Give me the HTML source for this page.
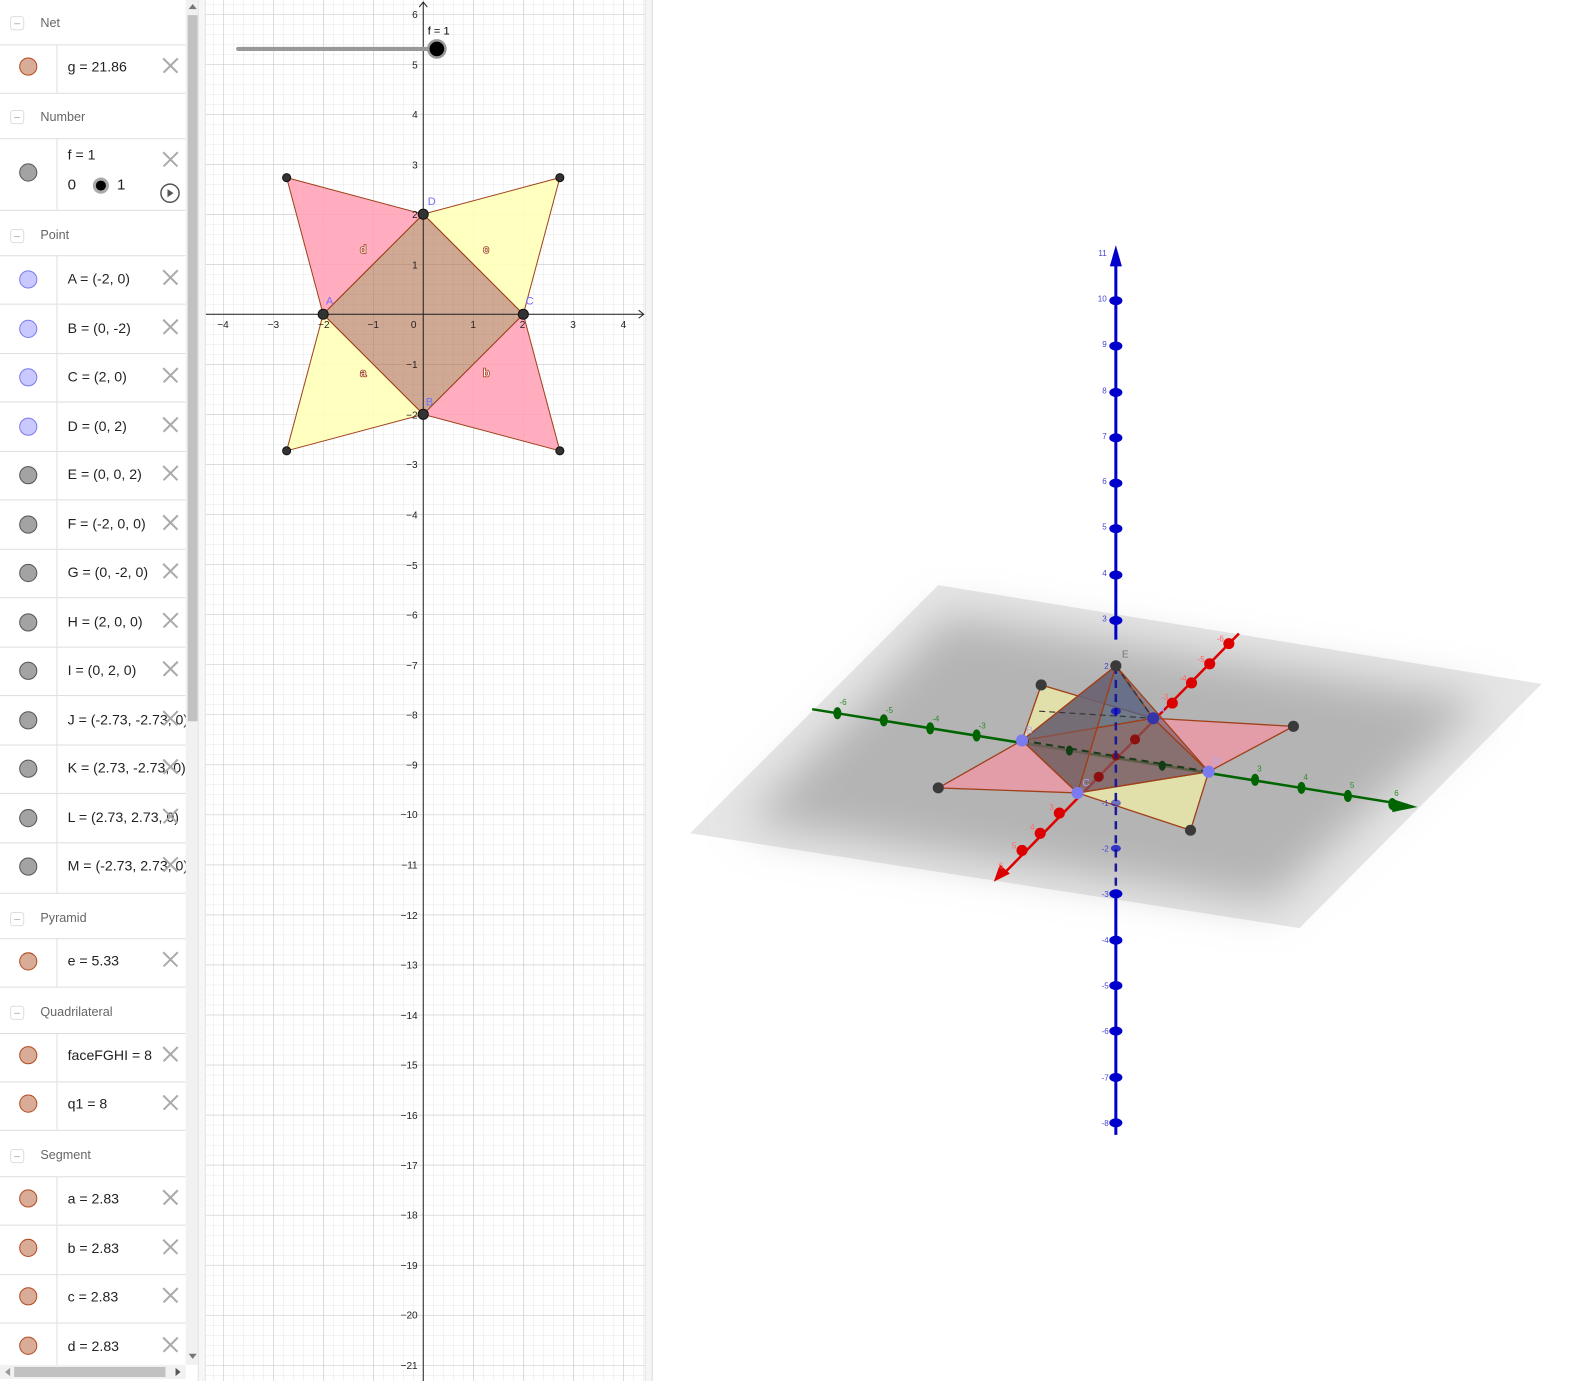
<!DOCTYPE html>
<html><head><meta charset="utf-8"><style>
html,body{margin:0;padding:0;background:#fff;overflow:hidden}
#wrap{position:absolute;left:0;top:0;width:1567px;height:1369px;transform:scale(1.0089,1.0088);transform-origin:0 0;font-family:"Liberation Sans",sans-serif}
.hd{position:absolute;left:0;width:184px;border-bottom:1px solid #dedede;color:#666;font-size:12.5px}
.hd .mb{position:absolute;left:10px;width:14px;height:14px;border:1px solid #ddd;border-radius:3px;box-sizing:border-box}
.hd .mb:after{content:"";position:absolute;left:3px;top:6px;width:6px;height:1px;background:#bbb}
.hd span{position:absolute;left:40px}
.it{position:absolute;left:0;width:184px;border-bottom:1px solid #dedede;overflow:hidden}
.it .dv{position:absolute;left:56px;top:0;bottom:0;width:1px;background:#dedede}
.it .c{position:absolute;left:19px;width:18px;height:18px;border-radius:50%;box-sizing:border-box}
.br{background:#d9ac97;border:1px solid #b5491f}
.bl{background:#c9c9ff;border:1px solid #7a7aee}
.gr{background:#a3a3a3;border:1px solid #555}
.it .t{position:absolute;left:67px;font-size:14px;color:#222;white-space:nowrap}
.it .x{position:absolute;left:161px;width:16px;height:16px}
.it .x:before,.it .x:after{content:"";position:absolute;left:-2px;top:7px;width:20px;height:1.5px;background:#aaa;transform:rotate(45deg)}
.it .x:after{transform:rotate(-45deg)}
</style></head><body><div id="wrap">

<div class="hd" style="top:0;height:44px"><div class="mb" style="top:16px"></div><span style="top:16px">Net</span></div>
<div class="it" style="top:44px;height:48px"><div class="c br" style="top:13px"></div><div class="dv"></div><div class="t" style="top:14px">g = 21.86</div><div class="x" style="top:13px"></div></div>
<div class="hd" style="top:92px;height:45px"><div class="mb" style="top:17px"></div><span style="top:17px">Number</span></div>
<div class="it" style="top:138px;height:70px"><div class="c gr" style="top:24px"></div><div class="dv"></div><div class="t" style="top:7px">f = 1</div>
<div class="t" style="top:37px;font-size:15px">0</div><div style="position:absolute;left:92px;top:38px;width:16px;height:16px;border-radius:50%;background:#000;border:3px solid #aaa;box-sizing:border-box"></div><div class="t" style="left:116px;top:37px;font-size:15px">1</div>
<div class="x" style="top:12px"></div>
<svg style="position:absolute;left:158px;top:43px" width="21" height="21"><circle cx="10.5" cy="10.5" r="9" fill="none" stroke="#555" stroke-width="1.5"/><path d="M8 6.5L14 10.5L8 14.5Z" fill="#555"/></svg></div>
<div class="hd" style="top:208px;height:45px"><div class="mb" style="top:19px"></div><span style="top:18px">Point</span></div>

<div class="it" style="top:253px;height:48px"><div class="c bl" style="top:15px"></div><div class="dv"></div><div class="t" style="top:15px">A = (-2, 0)</div><div class="x" style="top:14px"></div></div>
<div class="it" style="top:301.5px;height:48px"><div class="c bl" style="top:15px"></div><div class="dv"></div><div class="t" style="top:15px">B = (0, -2)</div><div class="x" style="top:14px"></div></div>
<div class="it" style="top:350px;height:48px"><div class="c bl" style="top:15px"></div><div class="dv"></div><div class="t" style="top:15px">C = (2, 0)</div><div class="x" style="top:14px"></div></div>
<div class="it" style="top:398.5px;height:48px"><div class="c bl" style="top:15px"></div><div class="dv"></div><div class="t" style="top:15px">D = (0, 2)</div><div class="x" style="top:14px"></div></div>
<div class="it" style="top:447px;height:48px"><div class="c gr" style="top:15px"></div><div class="dv"></div><div class="t" style="top:15px">E = (0, 0, 2)</div><div class="x" style="top:14px"></div></div>
<div class="it" style="top:495.5px;height:48px"><div class="c gr" style="top:15px"></div><div class="dv"></div><div class="t" style="top:15px">F = (-2, 0, 0)</div><div class="x" style="top:14px"></div></div>
<div class="it" style="top:544px;height:48px"><div class="c gr" style="top:15px"></div><div class="dv"></div><div class="t" style="top:15px">G = (0, -2, 0)</div><div class="x" style="top:14px"></div></div>
<div class="it" style="top:592.5px;height:48px"><div class="c gr" style="top:15px"></div><div class="dv"></div><div class="t" style="top:15px">H = (2, 0, 0)</div><div class="x" style="top:14px"></div></div>
<div class="it" style="top:641px;height:48px"><div class="c gr" style="top:15px"></div><div class="dv"></div><div class="t" style="top:15px">I = (0, 2, 0)</div><div class="x" style="top:14px"></div></div>
<div class="it" style="top:689.5px;height:48px"><div class="c gr" style="top:15px"></div><div class="dv"></div><div class="t" style="top:15px">J = (-2.73, -2.73, 0)</div><div class="x" style="top:14px"></div></div>
<div class="it" style="top:738px;height:48px"><div class="c gr" style="top:15px"></div><div class="dv"></div><div class="t" style="top:15px">K = (2.73, -2.73, 0)</div><div class="x" style="top:14px"></div></div>
<div class="it" style="top:786.5px;height:48px"><div class="c gr" style="top:15px"></div><div class="dv"></div><div class="t" style="top:15px">L = (2.73, 2.73, 0)</div><div class="x" style="top:14px"></div></div>
<div class="it" style="top:835px;height:50px"><div class="c gr" style="top:15px"></div><div class="dv"></div><div class="t" style="top:15px">M = (-2.73, 2.73, 0)</div><div class="x" style="top:14px"></div></div>

<div class="hd" style="top:886px;height:44px"><div class="mb" style="top:18px"></div><span style="top:17px">Pyramid</span></div>
<div class="it" style="top:930px;height:48px"><div class="c br" style="top:14px"></div><div class="dv"></div><div class="t" style="top:14px">e = 5.33</div><div class="x" style="top:13px"></div></div>
<div class="hd" style="top:978px;height:46px"><div class="mb" style="top:19px"></div><span style="top:18px">Quadrilateral</span></div>
<div class="it" style="top:1024px;height:48px"><div class="c br" style="top:13px"></div><div class="dv"></div><div class="t" style="top:14px">faceFGHI = 8</div><div class="x" style="top:13px"></div></div>
<div class="it" style="top:1072px;height:48px"><div class="c br" style="top:13px"></div><div class="dv"></div><div class="t" style="top:14px">q1 = 8</div><div class="x" style="top:13px"></div></div>
<div class="hd" style="top:1121px;height:45px"><div class="mb" style="top:18px"></div><span style="top:17px">Segment</span></div>
<div class="it" style="top:1166px;height:48px"><div class="c br" style="top:13px"></div><div class="dv"></div><div class="t" style="top:14px">a = 2.83</div><div class="x" style="top:13px"></div></div>
<div class="it" style="top:1214.5px;height:48px"><div class="c br" style="top:13px"></div><div class="dv"></div><div class="t" style="top:14px">b = 2.83</div><div class="x" style="top:13px"></div></div>
<div class="it" style="top:1263px;height:48px"><div class="c br" style="top:13px"></div><div class="dv"></div><div class="t" style="top:14px">c = 2.83</div><div class="x" style="top:13px"></div></div>
<div class="it" style="top:1311.5px;height:48px;border:none"><div class="c br" style="top:13px"></div><div class="dv"></div><div class="t" style="top:14px">d = 2.83</div><div class="x" style="top:13px"></div></div>

<div style="position:absolute;left:184px;top:0;width:12px;height:1353px;background:#f1f1f1"></div>
<div style="position:absolute;left:186px;top:15px;width:10px;height:700px;background:#c1c1c1"></div>
<div style="position:absolute;left:187px;top:4px;width:0;height:0;border-left:4px solid transparent;border-right:4px solid transparent;border-bottom:5px solid #777"></div>
<div style="position:absolute;left:187px;top:1342px;width:0;height:0;border-left:4px solid transparent;border-right:4px solid transparent;border-top:5px solid #777"></div>
<div style="position:absolute;left:0;top:1353px;width:184px;height:14px;background:#f1f1f1"></div>
<div style="position:absolute;left:14px;top:1355px;width:150px;height:10px;background:#c1c1c1"></div>
<div style="position:absolute;left:5px;top:1356px;border-top:4px solid transparent;border-bottom:4px solid transparent;border-right:5px solid #999"></div>
<div style="position:absolute;left:174px;top:1356px;border-top:4px solid transparent;border-bottom:4px solid transparent;border-left:5px solid #555"></div>
<div style="position:absolute;left:196px;top:0;width:8px;height:1369px;background:#f7f7f7;border-left:1px solid #e2e2e2;border-right:1px solid #e2e2e2;box-sizing:border-box"></div>
<div style="position:absolute;left:639px;top:0;width:8px;height:1369px;background:#f5f5f5;border-left:1px solid #e2e2e2;border-right:1px solid #ddd;box-sizing:border-box"></div>

<svg style="position:absolute;left:204px;top:0" width="435" height="1369" viewBox="204 0 435 1369" font-family="Liberation Sans,sans-serif">
<defs>
<pattern id="mi" x="419.5" y="311.5" width="9.92" height="9.92" patternUnits="userSpaceOnUse"><path d="M0 0H9.92M0 0V9.92" stroke="#e6e6e6" stroke-width="1" fill="none"/></pattern>
<pattern id="ma" x="419.5" y="311.5" width="49.6" height="49.6" patternUnits="userSpaceOnUse"><path d="M0 0H49.6M0 0V49.6" stroke="#c4c4c4" stroke-width="1" fill="none"/></pattern>
</defs>
<rect x="204" y="0" width="435" height="1369" fill="#fff"/>
<rect x="204" y="0" width="435" height="1369" fill="url(#mi)"/>
<rect x="204" y="0" width="435" height="1369" fill="url(#ma)"/>
<g stroke="#a0401a" stroke-width="1">
<polygon points="419.5,212.3 320.3,311.5 284.1,176.1" fill="#ff9fb4" fill-opacity="0.85"/>
<polygon points="419.5,410.7 518.7,311.5 554.9,446.9" fill="#ff9fb4" fill-opacity="0.85"/>
<polygon points="419.5,212.3 518.7,311.5 554.9,176.1" fill="#ffffb8" fill-opacity="0.9"/>
<polygon points="320.3,311.5 419.5,410.7 284.1,446.9" fill="#ffffb8" fill-opacity="0.9"/>
<polygon points="320.3,311.5 419.5,212.3 518.7,311.5 419.5,410.7" fill="#b0704d" fill-opacity="0.6"/>
</g>
<line x1="204" y1="311.5" x2="638" y2="311.5" stroke="#222" stroke-width="1"/>
<path d="M633 307.5L638 311.5L633 315.5" fill="none" stroke="#222"/>
<line x1="419.5" y1="2" x2="419.5" y2="1369" stroke="#222" stroke-width="1"/>
<path d="M415.5 7L419.5 2L423.5 7" fill="none" stroke="#222"/>
<g font-size="10" fill="#222" text-anchor="middle">
<text x="221" y="325">−4</text><text x="271" y="325">−3</text><text x="321" y="325">−2</text><text x="370" y="325">−1</text><text x="410" y="325">0</text><text x="469" y="325">1</text><text x="518" y="325">2</text><text x="568" y="325">3</text><text x="618" y="325">4</text>
</g>
<g font-size="10" fill="#222" text-anchor="end">
<text x="414" y="18">6</text><text x="414" y="68">5</text><text x="414" y="117">4</text><text x="414" y="167">3</text><text x="414" y="216">2</text><text x="414" y="266">1</text>
<text x="414" y="365">−1</text><text x="414" y="415">−2</text><text x="414" y="464">−3</text><text x="414" y="514">−4</text><text x="414" y="564">−5</text><text x="414" y="613">−6</text><text x="414" y="663">−7</text><text x="414" y="712">−8</text><text x="414" y="762">−9</text><text x="414" y="811">−10</text><text x="414" y="861">−11</text><text x="414" y="911">−12</text><text x="414" y="960">−13</text><text x="414" y="1010">−14</text><text x="414" y="1059">−15</text><text x="414" y="1109">−16</text><text x="414" y="1159">−17</text><text x="414" y="1208">−18</text><text x="414" y="1258">−19</text><text x="414" y="1307">−20</text><text x="414" y="1357">−21</text>
</g>
<g fill="#333" stroke="#111" stroke-width="1">
<circle cx="284.1" cy="176.1" r="4"/><circle cx="554.9" cy="176.1" r="4"/><circle cx="284.1" cy="446.9" r="4"/><circle cx="554.9" cy="446.9" r="4"/>
<circle cx="320.3" cy="311.5" r="5"/><circle cx="518.7" cy="311.5" r="5"/><circle cx="419.5" cy="212.3" r="5"/><circle cx="419.5" cy="410.7" r="5"/>
</g>
<g font-size="11" fill="#7070ff"><text x="323" y="302">A</text><text x="521" y="302">C</text><text x="424" y="203">D</text><text x="422" y="402">B</text></g>
<g font-size="11" fill="#fff" stroke="#a0401a" stroke-width="1.6" paint-order="stroke"><text x="357" y="251">d</text><text x="479" y="251">c</text><text x="357" y="373">a</text><text x="479" y="373">b</text></g>
<line x1="236" y1="48.5" x2="432" y2="48.5" stroke="#999" stroke-width="4" stroke-linecap="round"/>
<circle cx="433" cy="48.5" r="8.5" fill="#000" stroke="#999" stroke-width="2.5"/>
<text x="424" y="34" font-size="11" fill="#000">f = 1</text>
</svg>

<svg style="position:absolute;left:647px;top:0" width="920" height="1369" viewBox="647 0 920 1369" font-family="Liberation Sans,sans-serif">
<defs><filter id="bl" x="-20%" y="-20%" width="140%" height="140%"><feGaussianBlur stdDeviation="22"/></filter></defs>
<polygon points="930,580 1528,678 1288,920 684,826" fill="#e6e6e6"/>
<polygon points="940,610 1470,695 1260,895 740,815" fill="#b4b4b4" filter="url(#bl)"/>
<line x1="805" y1="703" x2="1395" y2="798" stroke="#006400" stroke-width="2.5"/>
<polygon points="1405,800 1380,792 1380,805" fill="#006400"/>
<g fill="#006400"><ellipse cx="830" cy="707" rx="4" ry="6"/><ellipse cx="876" cy="714" rx="4" ry="6"/><ellipse cx="922" cy="722" rx="4" ry="6"/><ellipse cx="968" cy="729" rx="4" ry="6"/><ellipse cx="1244" cy="773" rx="4" ry="6"/><ellipse cx="1290" cy="781" rx="4" ry="6"/><ellipse cx="1336" cy="789" rx="4" ry="6"/><ellipse cx="1380" cy="797" rx="4" ry="6"/></g>
<g font-size="8" fill="#2e8b2e"><text x="832" y="699">-6</text><text x="878" y="707">-5</text><text x="924" y="715">-4</text><text x="970" y="722">-3</text><text x="1246" y="765">3</text><text x="1292" y="773">4</text><text x="1338" y="781">5</text><text x="1382" y="789">6</text></g>
<line x1="1228" y1="628" x2="995" y2="866" stroke="#dd0000" stroke-width="2.5"/>
<polygon points="985,874 991,857 1001,866" fill="#dd0000"/>
<g fill="#dd0000"><circle cx="1218" cy="638" r="5.5"/><circle cx="1199" cy="658" r="5.5"/><circle cx="1181" cy="677" r="5.5"/><circle cx="1162" cy="697" r="5.5"/><circle cx="1050" cy="806" r="5.5"/><circle cx="1031" cy="826" r="5.5"/><circle cx="1013" cy="843" r="5.5"/></g>
<g font-size="8" fill="#ff6666"><text x="1206" y="636">-6</text><text x="1187" y="656">-5</text><text x="1169" y="675">-4</text><text x="1151" y="694">-3</text><text x="1040" y="803">3</text><text x="1021" y="823">4</text><text x="1003" y="841">5</text><text x="990" y="861">6</text></g>
<g stroke="#a0401a" stroke-width="1.3">
<polygon points="1013,734 930,781 1068,786" fill="#e79aa6" fill-opacity="0.9"/>
<polygon points="1143,712 1282,720 1198,765" fill="#e79aa6" fill-opacity="0.9"/>
<polygon points="1013,734 1032,679 1143,712" fill="#e6e3a8" fill-opacity="0.9"/>
<polygon points="1068,786 1180,823 1198,765" fill="#e6e3a8" fill-opacity="0.9"/>
<polygon points="1013,734 1143,712 1198,765 1068,786" fill="#7a5a5a" fill-opacity="0.75"/>
<polygon points="1106,660 1013,734 1143,712" fill="#55607e" fill-opacity="0.8"/>
<polygon points="1106,660 1143,712 1198,765" fill="#6a5c70" fill-opacity="0.6"/>
<polygon points="1106,660 1013,734 1068,786" fill="#7a5f66" fill-opacity="0.5"/>
<line x1="1106" y1="660" x2="1068" y2="786"/>
</g>
<line x1="1013" y1="734" x2="1198" y2="765" stroke="#1a3a1a" stroke-width="2" stroke-dasharray="7,5"/>
<line x1="1106" y1="660" x2="1143" y2="712" stroke="#333" stroke-width="1.5" stroke-dasharray="6,4"/>
<line x1="1030" y1="705" x2="1143" y2="712" stroke="#333" stroke-width="1.2" stroke-dasharray="6,4"/>
<g fill="#8b1010"><circle cx="1089" cy="770" r="5"/><circle cx="1125" cy="733" r="5"/><circle cx="1106" cy="750" r="4"/></g>
<g fill="#123d12"><ellipse cx="1060" cy="744" rx="3.5" ry="5"/><ellipse cx="1152" cy="759" rx="3.5" ry="5"/></g>
<line x1="1106" y1="255" x2="1106" y2="634" stroke="#0000cc" stroke-width="3"/>
<line x1="1106" y1="660" x2="1106" y2="885" stroke="#1a1a99" stroke-width="2.5" stroke-dasharray="8,6"/>
<line x1="1106" y1="887" x2="1106" y2="1125" stroke="#0000cc" stroke-width="3"/>
<polygon points="1106,243 1100,264 1112,264" fill="#0000cc"/>
<g fill="#0000cc">
<ellipse cx="1106" cy="298" rx="6.5" ry="4.5"/><ellipse cx="1106" cy="343" rx="6.5" ry="4.5"/><ellipse cx="1106" cy="389" rx="6.5" ry="4.5"/><ellipse cx="1106" cy="434" rx="6.5" ry="4.5"/><ellipse cx="1106" cy="479" rx="6.5" ry="4.5"/><ellipse cx="1106" cy="524" rx="6.5" ry="4.5"/><ellipse cx="1106" cy="570" rx="6.5" ry="4.5"/><ellipse cx="1106" cy="615" rx="6.5" ry="4.5"/>
<ellipse cx="1106" cy="705" rx="5" ry="3.5" opacity="0.7"/><ellipse cx="1106" cy="796" rx="5" ry="3.5" opacity="0.5"/><ellipse cx="1106" cy="841" rx="5" ry="3.5" opacity="0.7"/>
<ellipse cx="1106" cy="886" rx="6.5" ry="4.5"/><ellipse cx="1106" cy="932" rx="6.5" ry="4.5"/><ellipse cx="1106" cy="977" rx="6.5" ry="4.5"/><ellipse cx="1106" cy="1022" rx="6.5" ry="4.5"/><ellipse cx="1106" cy="1068" rx="6.5" ry="4.5"/><ellipse cx="1106" cy="1113" rx="6.5" ry="4.5"/></g>
<g font-size="8" fill="#4444cc" text-anchor="end">
<text x="1097" y="254">11</text><text x="1097" y="299">10</text><text x="1097" y="344">9</text><text x="1097" y="390">8</text><text x="1097" y="435">7</text><text x="1097" y="480">6</text><text x="1097" y="525">5</text><text x="1097" y="571">4</text><text x="1097" y="616">3</text><text x="1099" y="663">2</text><text x="1099" y="799">-1</text><text x="1099" y="844">-2</text><text x="1099" y="889">-3</text><text x="1099" y="935">-4</text><text x="1099" y="980">-5</text><text x="1099" y="1025">-6</text><text x="1099" y="1071">-7</text><text x="1099" y="1116">-8</text></g>
<g fill="#3a3a3a"><circle cx="1106" cy="660" r="5.5"/><circle cx="1032" cy="679" r="5.5"/><circle cx="1282" cy="720" r="5.5"/><circle cx="1180" cy="823" r="5.5"/><circle cx="930" cy="781" r="5.5"/></g>
<g fill="#7b7bf0"><circle cx="1013" cy="734" r="6"/><circle cx="1198" cy="765" r="6"/><circle cx="1068" cy="786" r="6"/></g>
<circle cx="1143" cy="712" r="6" fill="#3535aa"/>
<g font-size="10" fill="#aaaaff"><text x="1148" y="707">A</text><text x="1202" y="758">D</text><text x="1073" y="779">C</text><text x="1017" y="727">B</text></g>
<text x="1112" y="652" font-size="10" fill="#777">E</text>
</svg>
</div></body></html>
